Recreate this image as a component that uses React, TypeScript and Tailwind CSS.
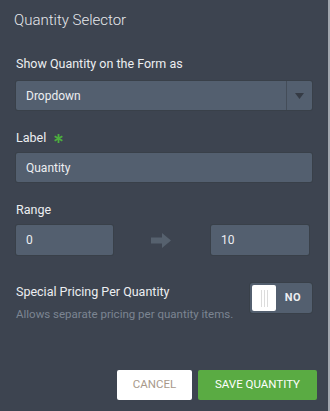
export default function App() {
  return (
    <div className="flex h-[411px] w-[330px] bg-[#3d4450]" style={{ fontFamily: 'Roboto, "Liberation Sans", Arial, sans-serif' }}>
      <div className="flex flex-1 flex-col">
        <div className="flex flex-col px-[16px]">
          <div className="-ml-[2px] mt-[10px] text-[15px] font-light leading-[20px] text-[#e6e8ec]">Quantity Selector</div>
          <div className="mt-[26px] text-[12.5px] leading-[16px] text-[#eceef1]">Show Quantity on the Form as</div>
          <div className="mt-[9px] flex h-[29px] w-[296px] items-stretch rounded-[2px] bg-[#535f6f] shadow-[0_0_0_1px_#394049]">
            <div className="flex flex-1 items-center pl-[10px] text-[12px] text-[#eceef1]">Dropdown</div>
            <div className="flex w-[26px] items-center justify-center border-l border-[#444d59]">
              <svg width="9" height="6" viewBox="0 0 9 6"><path d="M0 0 L9 0 L4.5 6 Z" fill="#353b45" /></svg>
            </div>
          </div>
          <div className="mt-[20px] flex items-center gap-[8px] text-[12.5px] leading-[16px] text-[#eceef1]">
            <span>Label</span>
            <svg width="9" height="9" viewBox="0 0 10 10" className="mt-[1px]">
              <g stroke="#4caf3e" strokeWidth="2" strokeLinecap="butt">
                <line x1="5" y1="0" x2="5" y2="10" />
                <line x1="0.7" y1="2.5" x2="9.3" y2="7.5" />
                <line x1="0.7" y1="7.5" x2="9.3" y2="2.5" />
              </g>
            </svg>
          </div>
          <div className="mt-[7px] flex h-[29px] w-[296px] items-center rounded-[2px] bg-[#535f6f] pl-[10px] text-[12px] text-[#eceef1] shadow-[0_0_0_1px_#394049]">Quantity</div>
          <div className="mt-[20px] text-[12.5px] leading-[16px] text-[#eceef1]">Range</div>
          <div className="mt-[7px] flex items-center">
            <div className="flex h-[30px] w-[97px] items-center rounded-[2px] bg-[#535f6f] pl-[10px] text-[12px] text-[#eceef1] shadow-[0_0_0_1px_#394049]">0</div>
            <div className="flex flex-1 items-center justify-center pr-[2px]">
              <svg width="20" height="15" viewBox="0 0 20 15"><path d="M0 4.5 H11 V0 L20 7.5 L11 15 V10.5 H0 Z" fill="#56616e" /></svg>
            </div>
            <div className="mr-[3px] flex h-[30px] w-[98px] items-center rounded-[2px] bg-[#535f6f] pl-[10px] text-[12px] text-[#eceef1] shadow-[0_0_0_1px_#394049]">10</div>
          </div>
          <div className="mt-[29px] flex items-start justify-between">
            <div className="flex flex-col">
              <div className="text-[12.5px] leading-[16px] text-[#eceef1]">Special Pricing Per Quantity</div>
              <div className="mt-[7px] text-[11.5px] leading-[14px] text-[#7c8592]">Allows separate pricing per quantity items.</div>
            </div>
            <div className="-mt-[1px] flex h-[30px] w-[62px] items-center rounded-[3px] bg-[#535f6f] px-[2px] shadow-[0_0_0_1px_#394049]">
              <div className="flex h-[26px] w-[24px] items-center justify-center gap-[2px] rounded-[2px] bg-white">
                <div className="h-[17px] w-px bg-[#dcdcdc]" />
                <div className="h-[17px] w-px bg-[#dcdcdc]" />
                <div className="h-[17px] w-px bg-[#dcdcdc]" />
              </div>
              <div className="flex flex-1 items-center justify-center text-[11px] font-bold tracking-[0.5px] text-[#eceef1]">NO</div>
            </div>
          </div>
        </div>
        <div className="mt-auto mb-[11px] flex justify-end gap-[6px] pr-[11px]">
          <div className="flex h-[30px] w-[75px] items-center justify-center rounded-[2px] bg-white text-[11.5px] text-[#a8998a]">CANCEL</div>
          <div className="flex h-[30px] w-[119px] items-center justify-center rounded-[2px] bg-[#5aab43] text-[11.5px] text-white">SAVE QUANTITY</div>
        </div>
      </div>
      <div className="w-[3px] bg-[#a3a8af]" />
    </div>
  );
}
